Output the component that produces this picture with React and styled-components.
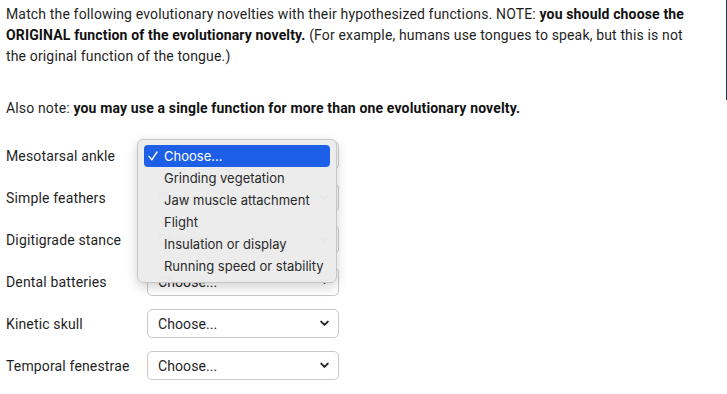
import React from "react";
import styled, { createGlobalStyle } from "styled-components";

const GlobalStyle = createGlobalStyle`
  html, body { margin: 0; padding: 0; background: #ffffff; }
  body { font-family: Roboto, "Liberation Sans", Arial, sans-serif; color: #1f1f1f; }
  * { box-sizing: border-box; }
`;

const Page = styled.div`
  position: relative;
  padding: 4px 6px 0 6px;
  width: 727px;
  height: 394px;
  overflow: hidden;
`;

const EdgeLine = styled.div`
  position: absolute;
  top: 0;
  right: 0;
  width: 1px;
  height: 100px;
  background: #1d3557;
`;

const Para = styled.p`
  max-width: 690px;
  margin: 0 0 ${(p) => p.$after || 0}px 0;
  font-size: 14px;
  line-height: 21px;
  letter-spacing: 0.15px;
`;

const Strong = styled.b`
  font-weight: 700;
  color: #111;
`;

const Form = styled.div`
  margin-top: 22px;
  display: flex;
  flex-direction: column;
  gap: 13px;
`;

const Row = styled.div`
  display: grid;
  grid-template-columns: 141px 192px;
  align-items: center;
  height: 29px;
`;

const Label = styled.label`
  font-size: 14px;
  letter-spacing: 0.15px;
  color: #1f1f1f;
`;

const SelectWrap = styled.div`
  position: relative;
  height: 29px;
`;

const SelectBox = styled.div`
  height: 29px;
  border: 1px solid #c9c9c9;
  border-radius: 5px;
  background: #fff;
  display: flex;
  align-items: center;
  justify-content: space-between;
  padding: 0 9px 0 10px;
  font-size: 14px;
  letter-spacing: 0.1px;
  color: #1f1f1f;
`;

const Chevron = () => (
  <svg width="9" height="7" viewBox="0 0 9 7" aria-hidden="true">
    <path d="M1.2 1.6 L4.5 4.9 L7.8 1.6" fill="none" stroke="#222" strokeWidth="1.9" strokeLinecap="round" strokeLinejoin="round" />
  </svg>
);

const Menu = styled.ul`
  position: absolute;
  left: -10px;
  top: -2px;
  width: 200px;
  margin: 0;
  padding: 5px 6px;
  list-style: none;
  background: rgba(236, 236, 236, 0.98);
  border: 1px solid #c6c6c6;
  border-radius: 6px;
  box-shadow: 0 4px 12px rgba(0, 0, 0, 0.18);
  z-index: 5;
  font-family: Inter, Roboto, "Liberation Sans", sans-serif;
  font-size: 13px;
`;

const MenuItem = styled.li`
  position: relative;
  height: 22px;
  line-height: 22px;
  padding-left: 20px;
  border-radius: 4px;
  color: ${(p) => (p.$active ? "#ffffff" : "#2a2a2a")};
  background: ${(p) => (p.$active ? "#1d5fe6" : "transparent")};
  white-space: nowrap;
`;

const CheckIcon = styled.svg`
  position: absolute;
  left: 4px;
  top: 6px;
`;

const Check = () => (
  <CheckIcon width="10" height="10" viewBox="0 0 10 10" aria-hidden="true">
    <path d="M1 5.4 L3.8 8.8 L9 1" fill="none" stroke="#fff" strokeWidth="1.4" strokeLinecap="round" strokeLinejoin="round" />
  </CheckIcon>
);

const rows = [
  "Mesotarsal ankle",
  "Simple feathers",
  "Digitigrade stance",
  "Dental batteries",
  "Kinetic skull",
  "Temporal fenestrae",
];

const options = [
  "Choose...",
  "Grinding vegetation",
  "Jaw muscle attachment",
  "Flight",
  "Insulation or display",
  "Running speed or stability",
];

export default function App() {
  return (
    <>
      <GlobalStyle />
      <Page>
        <EdgeLine />
        <Para $after={31}>
          Match the following evolutionary novelties with their hypothesized functions. NOTE:{" "}
          <Strong>you should choose the ORIGINAL function of the evolutionary novelty.</Strong>{" "}
          (For example, humans use tongues to speak, but this is not the original function of the tongue.)
        </Para>
        <Para>
          Also note: <Strong>you may use a single function for more than one evolutionary novelty.</Strong>
        </Para>
        <Form>
          {rows.map((r, i) => (
            <Row key={r}>
              <Label>{r}</Label>
              <SelectWrap>
                <SelectBox>
                  <span>Choose...</span>
                  <Chevron />
                </SelectBox>
                {i === 0 && (
                  <Menu>
                    {options.map((o, j) => (
                      <MenuItem key={o} $active={j === 0}>
                        {j === 0 && <Check />}
                        {o}
                      </MenuItem>
                    ))}
                  </Menu>
                )}
              </SelectWrap>
            </Row>
          ))}
        </Form>
      </Page>
    </>
  );
}
